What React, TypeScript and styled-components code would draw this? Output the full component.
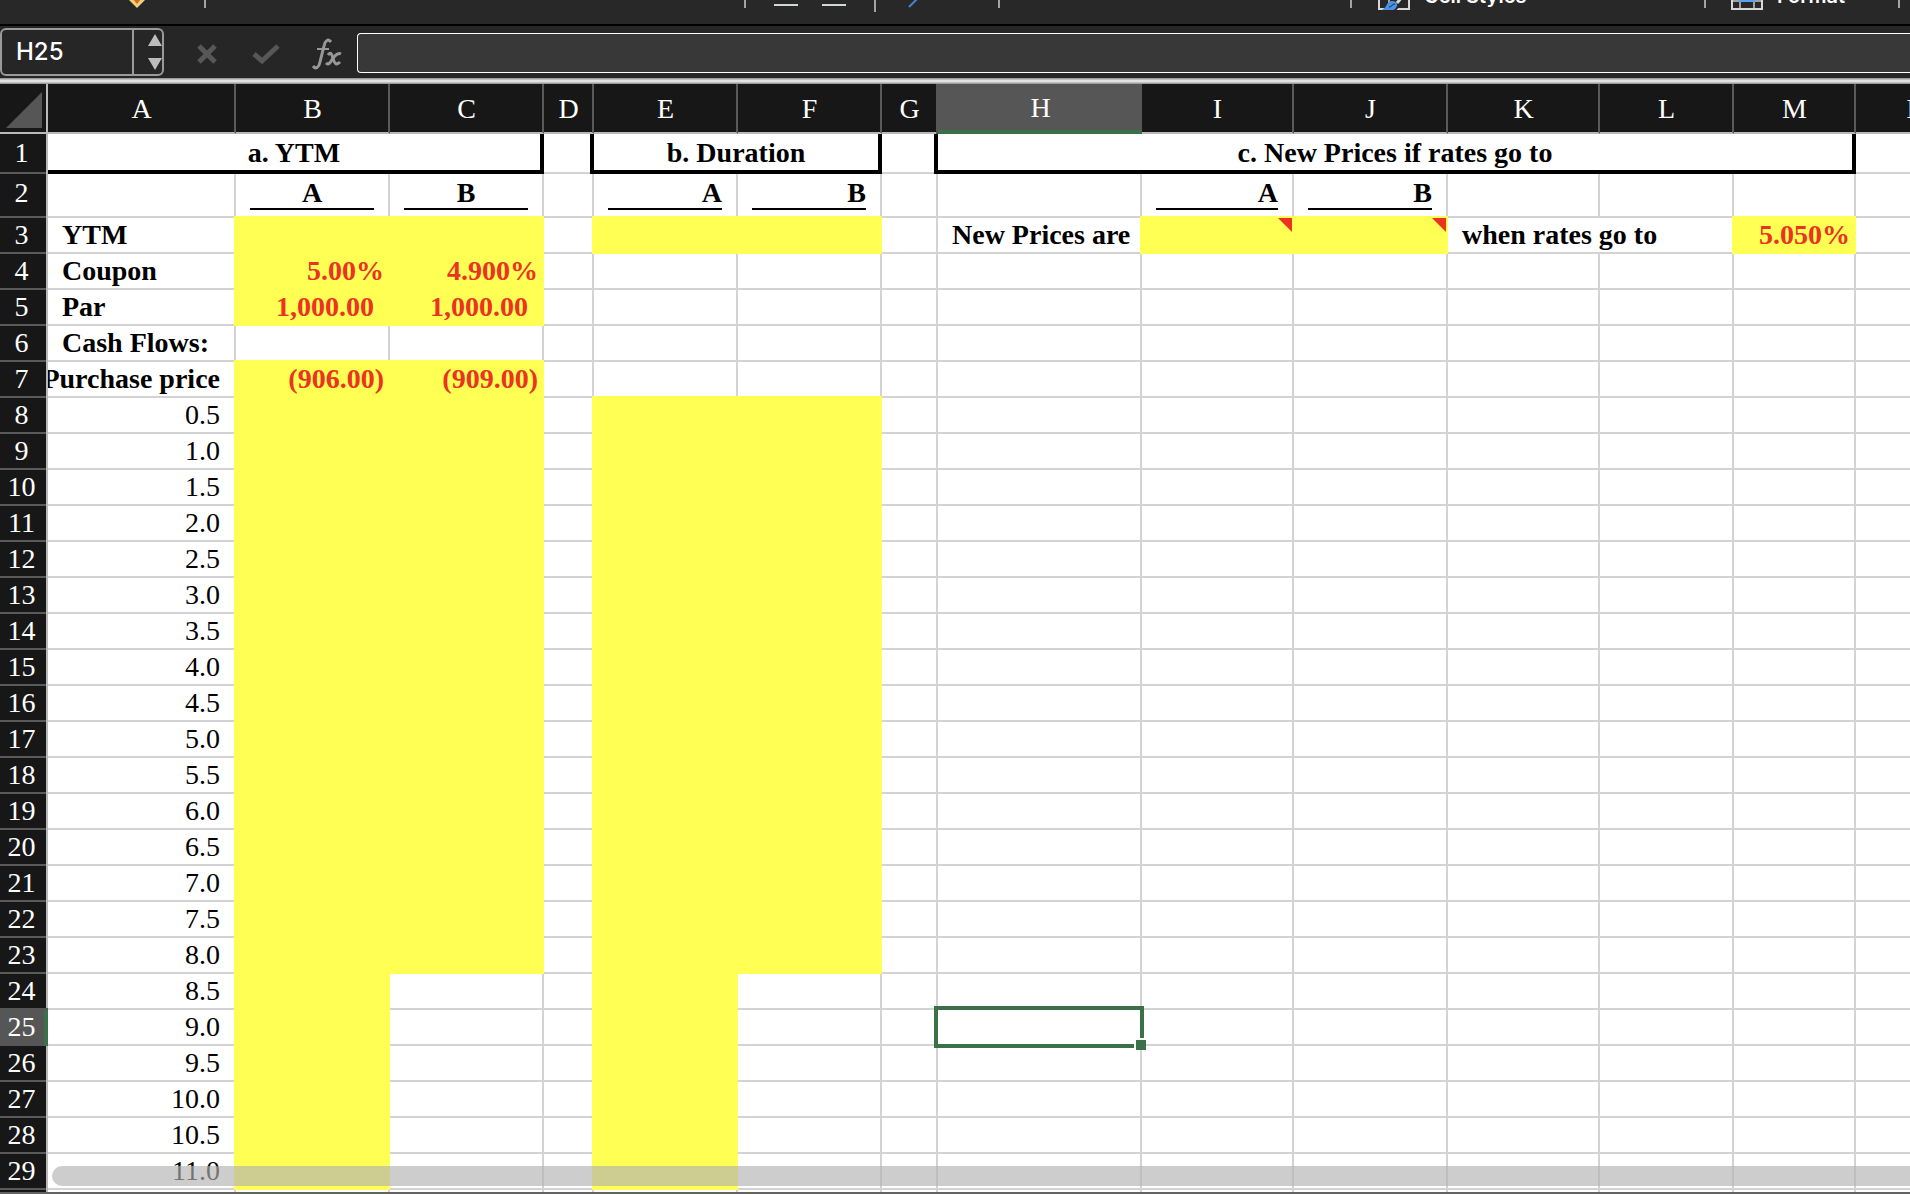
import React from "react";
import styled, { createGlobalStyle, css } from "styled-components";

const SERIF = '"Liberation Serif", "Times New Roman", serif';
const SANS = 'Inter, "Liberation Sans", sans-serif';

const c = {
  ribbon: "#282828",
  bar: "#262626",
  head: "#171717",
  headActive: "#565656",
  headLine: "#5a5a5a",
  edge: "#b9b9b9",
  grid: "#d3d3d3",
  yellow: "#ffff54",
  red: "#ec3223",
  green: "#3b7149",
  black: "#000000",
};

const GlobalStyle = createGlobalStyle`
  *, *::before, *::after { box-sizing: border-box; }
  body { margin: 0; background: #ffffff; }
`;

const Window = styled.div`
  display: flex;
  flex-direction: column;
  height: 100vh;
  overflow: hidden;
  background: #ffffff;
`;

/* ---------- ribbon ---------- */

const Ribbon = styled.div`
  display: flex;
  align-items: flex-end;
  flex: none;
  height: 26px;
  overflow: hidden;
  background: ${c.ribbon};
  border-bottom: 2px solid ${c.black};
`;

const RibbonGroup = styled.div<{ $width: number; $pad: number; $gap?: number }>`
  display: flex;
  align-items: flex-end;
  flex: none;
  width: ${(p) => p.$width}px;
  padding-left: ${(p) => p.$pad}px;
  gap: ${(p) => p.$gap ?? 0}px;
`;

const Divider = styled.span<{ $long?: boolean }>`
  flex: none;
  width: 2px;
  height: 48px;
  margin-bottom: ${(p) => (p.$long ? 12 : 16)}px;
  background: #a3a3a3;
`;

const RibbonButton = styled.button`
  display: flex;
  align-items: flex-end;
  gap: 14px;
  padding: 0;
  border: 0;
  background: none;
  color: #ffffff;
  font: 600 20px/24px ${SANS};
  white-space: nowrap;
  svg {
    display: block;
    flex: none;
  }
`;

const RibbonIcon = styled.span`
  display: block;
  padding-bottom: 14px;
`;

const ButtonText = styled.span`
  display: block;
  padding-bottom: 16px;
`;

/* ---------- formula bar ---------- */

const FormulaBar = styled.div`
  display: flex;
  flex: none;
  align-items: center;
  height: 52px;
  background: ${c.bar};
`;

const NameBox = styled.div`
  display: flex;
  flex: none;
  width: 164px;
  height: 48px;
  border: 2px solid #9a9a9a;
  border-radius: 6px;
`;

const NameInput = styled.input`
  width: 132px;
  min-width: 0;
  padding: 0 0 0 14px;
  border: 0;
  border-right: 2px solid #9a9a9a;
  background: transparent;
  color: #ffffff;
  font: 500 24px/32px ${SANS};
  outline: none;
`;

const Stepper = styled.div`
  display: flex;
  flex: 1;
  flex-direction: column;
  justify-content: space-between;
  align-items: flex-end;
  padding: 4px 0;
`;

const IconButton = styled.button`
  display: block;
  flex: none;
  padding: 0;
  border: 0;
  background: none;
  svg {
    display: block;
    overflow: visible;
  }
`;

const FormulaActions = styled.div`
  display: flex;
  flex: none;
  align-items: center;
  width: 193px;
  padding: 4px 0 0 32px;
  gap: 34px;
`;

const FormulaInput = styled.input`
  flex: 1;
  min-width: 0;
  height: 40px;
  margin-top: 2px;
  padding: 0 12px;
  border: 1px solid #ffffff;
  border-right: 0;
  border-radius: 4px 0 0 4px;
  background: #383838;
  color: #ffffff;
  font: 24px/32px ${SANS};
  outline: none;
`;

const Groove = styled.div`
  flex: none;
  height: 6px;
  background: linear-gradient(#8b8b8b, #f4f4f4 50%, #8b8b8b);
`;

/* ---------- sheet ---------- */

const SheetArea = styled.main`
  position: relative;
  flex: 1;
  min-height: 0;
  overflow: hidden;
`;

const Sheet = styled.table`
  width: 100%;
  min-width: 1978px;
  table-layout: fixed;
  border-collapse: separate;
  border-spacing: 0;
  color: ${c.black};
  font: 28px/34px ${SERIF};
  td,
  th {
    padding: 0;
    vertical-align: top;
    font-weight: 400;
  }
`;

const Corner = styled.td`
  height: 50px;
  background: ${c.head};
  border-right: 2px solid ${c.edge};
  border-bottom: 2px solid ${c.edge};
  svg {
    display: block;
    margin: 8px 0 0 6px;
  }
`;

const ColumnHead = styled.th<{ $active: boolean }>`
  height: 50px;
  background: ${c.head};
  border-right: 2px solid ${c.headLine};
  border-bottom: 2px solid ${c.edge};
  color: #ffffff;
  text-align: center;
  && {
    padding: 2px 0 0 1px;
  }
  line-height: 46px;
  ${(p) =>
    p.$active &&
    css`
      background: ${c.headActive};
      border-right: 0;
      border-bottom: 4px solid ${c.green};
      box-shadow: -2px 0 0 ${c.headActive}, -2px 0 0 ${c.green};
      line-height: 44px;
    `}
`;

const RowHead = styled.th<{ $active: boolean; $tall: boolean }>`
  background: ${c.head};
  border-right: 2px solid ${c.edge};
  box-shadow: inset 0 -2px 0 ${c.headLine};
  color: #ffffff;
  text-align: center;
  line-height: ${(p) => (p.$tall ? 38 : 34)}px;
  && {
    padding-right: 3px;
  }
  ${(p) =>
    p.$active &&
    css`
      background: ${c.headActive};
      border-right: 4px solid ${c.green};
      box-shadow: 0 -2px 0 ${c.headActive};
      && {
        padding-right: 1px;
      }
    `}
`;

type Fill = "none" | "yellow" | "box";

const Cell = styled.td<{ $fill: Fill; $height: number }>`
  position: relative;
  height: ${(p) => p.$height}px;
  border-right: 2px solid ${c.grid};
  border-bottom: 2px solid ${c.grid};
  ${(p) =>
    p.$fill === "yellow" &&
    css`
      background: ${c.yellow};
      border-color: ${c.yellow};
      box-shadow: -2px 0 0 ${c.yellow}, 0 -2px 0 ${c.yellow}, -2px -2px 0 ${c.yellow};
    `}
  ${(p) =>
    p.$fill === "box" &&
    css`
      border-right: 4px solid ${c.black};
      border-bottom: 4px solid ${c.black};
    `}
  ${(p) =>
    p.$fill === "box" &&
    p.colSpan !== 3 &&
    css`
      box-shadow: -4px 0 0 ${c.black};
    `}
`;

type Align = "left" | "center" | "right";

const Content = styled.div<{
  $align: Align;
  $tight?: boolean;
  $bold?: boolean;
  $red?: boolean;
  $title?: boolean;
}>`
  display: flex;
  justify-content: ${(p) =>
    p.$align === "left" ? "flex-start" : p.$align === "right" ? "flex-end" : "center"};
  height: ${(p) => (p.$title ? 36 : 34)}px;
  padding: 0 ${(p) => (p.$tight ? 4 : 14)}px 0 14px;
  overflow: hidden;
  white-space: nowrap;
  font-weight: ${(p) => (p.$bold ? 700 : 400)};
  color: ${(p) => (p.$red ? c.red : c.black)};
  line-height: ${(p) => (p.$title ? 38 : 34)}px;
`;

const Underlined = styled.div<{ $align: Align }>`
  height: 36px;
  margin: 0 14px;
  border-bottom: 2px solid ${c.black};
  font-weight: 700;
  line-height: 38px;
  text-align: ${(p) => p.$align};
`;

const NoteMark = styled.span`
  position: absolute;
  top: 0;
  right: 0;
  width: 14px;
  height: 14px;
  background: ${c.red};
  clip-path: polygon(0 0, 100% 0, 100% 100%);
`;

const Selection = styled.div`
  position: absolute;
  inset: -4px;
  z-index: 1;
  border: 4px solid ${c.green};
`;

const FillHandle = styled.span`
  position: absolute;
  right: -6px;
  bottom: -6px;
  width: 12px;
  height: 12px;
  border-top: 2px solid #ffffff;
  border-left: 2px solid #ffffff;
  background: ${c.green};
`;

const ScrollThumb = styled.div`
  position: absolute;
  z-index: 2;
  left: 52px;
  right: -12px;
  bottom: 6px;
  height: 20px;
  border-radius: 10px;
  background: rgba(178, 178, 178, 0.65);
`;

const BottomEdge = styled.div`
  flex: none;
  height: 2px;
  background: #636363;
`;

/* ---------- data ---------- */

const COLUMNS: [string, number | null][] = [
  ["A", 188],
  ["B", 154],
  ["C", 154],
  ["D", 50],
  ["E", 144],
  ["F", 144],
  ["G", 56],
  ["H", 204],
  ["I", 152],
  ["J", 154],
  ["K", 152],
  ["L", 134],
  ["M", 122],
  ["N", null],
];

interface CellData {
  text?: string;
  align?: Align;
  span?: number;
  bold?: boolean;
  red?: boolean;
  tight?: boolean;
  box?: boolean;
  underline?: boolean;
  note?: boolean;
}

const title = (text: string, span: number): CellData => ({
  text,
  span,
  align: "center",
  bold: true,
  box: true,
});
const label = (text: string): CellData => ({ text, bold: true });
const heading = (text: string, align: Align): CellData => ({ text, align, underline: true });
const figure = (text: string, tight = true): CellData => ({
  text,
  tight,
  align: "right",
  bold: true,
  red: true,
});

const CELLS: Record<string, CellData> = {
  A1: title("a. YTM", 3),
  E1: title("b. Duration", 2),
  H1: title("c. New Prices if rates go to", 6),
  B2: heading("A", "center"),
  C2: heading("B", "center"),
  E2: heading("A", "right"),
  F2: heading("B", "right"),
  I2: heading("A", "right"),
  J2: heading("B", "right"),
  A3: label("YTM"),
  H3: label("New Prices are"),
  I3: { note: true },
  J3: { note: true },
  K3: { ...label("when rates go to"), span: 2 },
  M3: figure("5.050%"),
  A4: label("Coupon"),
  B4: figure("5.00%"),
  C4: figure("4.900%"),
  A5: label("Par"),
  B5: figure("1,000.00", false),
  C5: figure("1,000.00", false),
  A6: label("Cash Flows:"),
  A7: { text: "Purchase price", align: "right", bold: true },
  B7: figure("(906.00)"),
  C7: figure("(909.00)"),
};

for (let row = 8; row <= 29; row++) {
  CELLS[`A${row}`] = { text: ((row - 7) / 2).toFixed(1), align: "right" };
}

const isYellow = (col: string, row: number): boolean => {
  if (row === 3) return "BCEFIJM".includes(col);
  if (row === 4 || row === 5 || row === 7) return "BC".includes(col);
  if (row >= 8 && row <= 23) return "BCEF".includes(col);
  if (row >= 24 && row <= 29) return "BE".includes(col);
  return false;
};

const rowHeight = (row: number) => (row === 1 ? 40 : row === 2 ? 44 : 36);

const ACTIVE = { col: "H", row: 25 };

function SheetRow({ row }: { row: number }) {
  const cells: React.ReactNode[] = [];
  for (let i = 0; i < COLUMNS.length; ) {
    const col = COLUMNS[i][0];
    const d = CELLS[`${col}${row}`] ?? {};
    cells.push(
      <Cell
        key={col}
        colSpan={d.span}
        $height={rowHeight(row)}
        $fill={d.box ? "box" : isYellow(col, row) ? "yellow" : "none"}
      >
        {d.text &&
          (d.underline ? (
            <Underlined $align={d.align ?? "left"}>{d.text}</Underlined>
          ) : (
            <Content
              $align={d.align ?? "left"}
              $bold={d.bold}
              $red={d.red}
              $tight={d.tight}
              $title={row === 1}
            >
              {d.text}
            </Content>
          ))}
        {d.note && <NoteMark />}
        {col === ACTIVE.col && row === ACTIVE.row && (
          <Selection>
            <FillHandle />
          </Selection>
        )}
      </Cell>
    );
    i += d.span ?? 1;
  }
  return (
    <tr>
      <RowHead scope="row" $active={row === ACTIVE.row} $tall={row <= 2}>
        {row}
      </RowHead>
      {cells}
    </tr>
  );
}

function CellStylesIcon() {
  return (
    <svg width="32" height="32" viewBox="0 0 32 32">
      <path d="M1 1H31V31H1Z" fill="none" stroke="#d8d8d8" strokeWidth="2" />
      <path d="M2 15H20M11 2V28" stroke="#a8a8a8" strokeWidth="2" />
      <path d="M30 12L18 26L14 30" stroke="#282828" strokeWidth="9" />
      <path d="M29 13L19 25" stroke="#d8d8d8" strokeWidth="3" />
      <path d="M4 31C9 31 8 23 14 23C19 23 21 27 17 31C14 34 7 34 4 31Z" fill="#4a93e6" />
      <path d="M11 29C14 29 14 26 17 26" fill="none" stroke="#282828" strokeWidth="1" />
    </svg>
  );
}

function FormatIcon() {
  return (
    <svg width="32" height="32" viewBox="0 0 32 32">
      <path d="M9 2V30M23 2V30M2 23H30" stroke="#a0a0a0" strokeWidth="2" />
      <path d="M1 1H31V31H1Z" fill="none" stroke="#d8d8d8" strokeWidth="2" />
      <rect x="8" y="10" width="16" height="14" fill="#5aa2ee" />
    </svg>
  );
}

function AlignIcon() {
  return (
    <svg width="24" height="24" viewBox="0 0 24 24">
      <path d="M0 5H24" stroke="#d2d6d4" strokeWidth="2" />
    </svg>
  );
}

export default function App() {
  return (
    <Window>
      <GlobalStyle />
      <Ribbon>
        <RibbonGroup $width={204} $pad={128}>
          <RibbonButton aria-label="Format painter">
            <svg width="18" height="32" viewBox="0 0 18 32">
              <path d="M0 7L9 -2L18 7L9 16Z" fill="#f3cf7a" />
              <path d="M4 6H14L9 12Z" fill="#c9731c" />
            </svg>
          </RibbonButton>
        </RibbonGroup>
        <Divider />
        <RibbonGroup $width={538} $pad={0} />
        <Divider />
        <RibbonGroup $width={128} $pad={28} $gap={24}>
          <RibbonButton aria-label="Align left">
            <AlignIcon />
          </RibbonButton>
          <RibbonButton aria-label="Align center">
            <AlignIcon />
          </RibbonButton>
        </RibbonGroup>
        <Divider $long />
        <RibbonGroup $width={122} $pad={32}>
          <RibbonButton aria-label="Orientation">
            <svg width="24" height="24" viewBox="0 0 24 24">
              <path d="M1 7L15 -7" stroke="#3f86d2" strokeWidth="2" />
            </svg>
          </RibbonButton>
        </RibbonGroup>
        <Divider />
        <RibbonGroup $width={350} $pad={0} />
        <Divider />
        <RibbonGroup $width={352} $pad={26}>
          <RibbonButton>
            <RibbonIcon>
              <CellStylesIcon />
            </RibbonIcon>
            <ButtonText>Cell Styles</ButtonText>
          </RibbonButton>
        </RibbonGroup>
        <Divider />
        <RibbonGroup $width={192} $pad={25}>
          <RibbonButton>
            <RibbonIcon>
              <FormatIcon />
            </RibbonIcon>
            <ButtonText>Format</ButtonText>
          </RibbonButton>
        </RibbonGroup>
        <Divider />
      </Ribbon>

      <FormulaBar>
        <NameBox>
          <NameInput aria-label="Name box" defaultValue="H25" />
          <Stepper>
            <IconButton aria-label="Previous">
              <svg width="14" height="12" viewBox="0 0 14 12">
                <path d="M7 0L14 12H0Z" fill="#bdbdbd" />
              </svg>
            </IconButton>
            <IconButton aria-label="Next">
              <svg width="14" height="12" viewBox="0 0 14 12">
                <path d="M7 12L14 0H0Z" fill="#bdbdbd" />
              </svg>
            </IconButton>
          </Stepper>
        </NameBox>
        <FormulaActions>
          <IconButton aria-label="Cancel">
            <svg width="22" height="22" viewBox="0 0 22 22">
              <path d="M3 3L19 19M19 3L3 19" stroke="#575757" strokeWidth="5" />
            </svg>
          </IconButton>
          <IconButton aria-label="Enter">
            <svg width="28" height="22" viewBox="0 0 28 22">
              <path d="M2 11L10 18L26 3" fill="none" stroke="#575757" strokeWidth="5" />
            </svg>
          </IconButton>
          <IconButton aria-label="Insert function">
            <svg width="32" height="32" viewBox="3 0 32 32">
              <g fill="none" stroke="#989898">
                <path d="M20 4C17 0 14 3 13 8L9 24C8 29 5 32 2 28" strokeWidth="3" />
                <path d="M6 11H18" strokeWidth="2" />
                <path d="M17 17C20 13 21 17 22 20C23 25 25 28 29 24" strokeWidth="3" />
                <path d="M30 16C26 14 24 18 22 20C20 23 18 28 15 25" strokeWidth="3" />
              </g>
            </svg>
          </IconButton>
        </FormulaActions>
        <FormulaInput aria-label="Formula" defaultValue="" />
      </FormulaBar>
      <Groove />

      <SheetArea>
        <Sheet>
          <colgroup>
            <col width={48} />
            {COLUMNS.map(([name, width]) => (
              <col key={name} width={width ?? undefined} />
            ))}
          </colgroup>
          <thead>
            <tr>
              <Corner>
                <svg width="36" height="36" viewBox="0 0 36 36">
                  <path d="M36 0V36H0Z" fill="#565656" />
                </svg>
              </Corner>
              {COLUMNS.map(([name]) => (
                <ColumnHead key={name} scope="col" $active={name === ACTIVE.col}>
                  {name}
                </ColumnHead>
              ))}
            </tr>
          </thead>
          <tbody>
            {Array.from({ length: 30 }, (_, i) => (
              <SheetRow key={i + 1} row={i + 1} />
            ))}
          </tbody>
        </Sheet>
        <ScrollThumb />
      </SheetArea>
      <BottomEdge />
    </Window>
  );
}
